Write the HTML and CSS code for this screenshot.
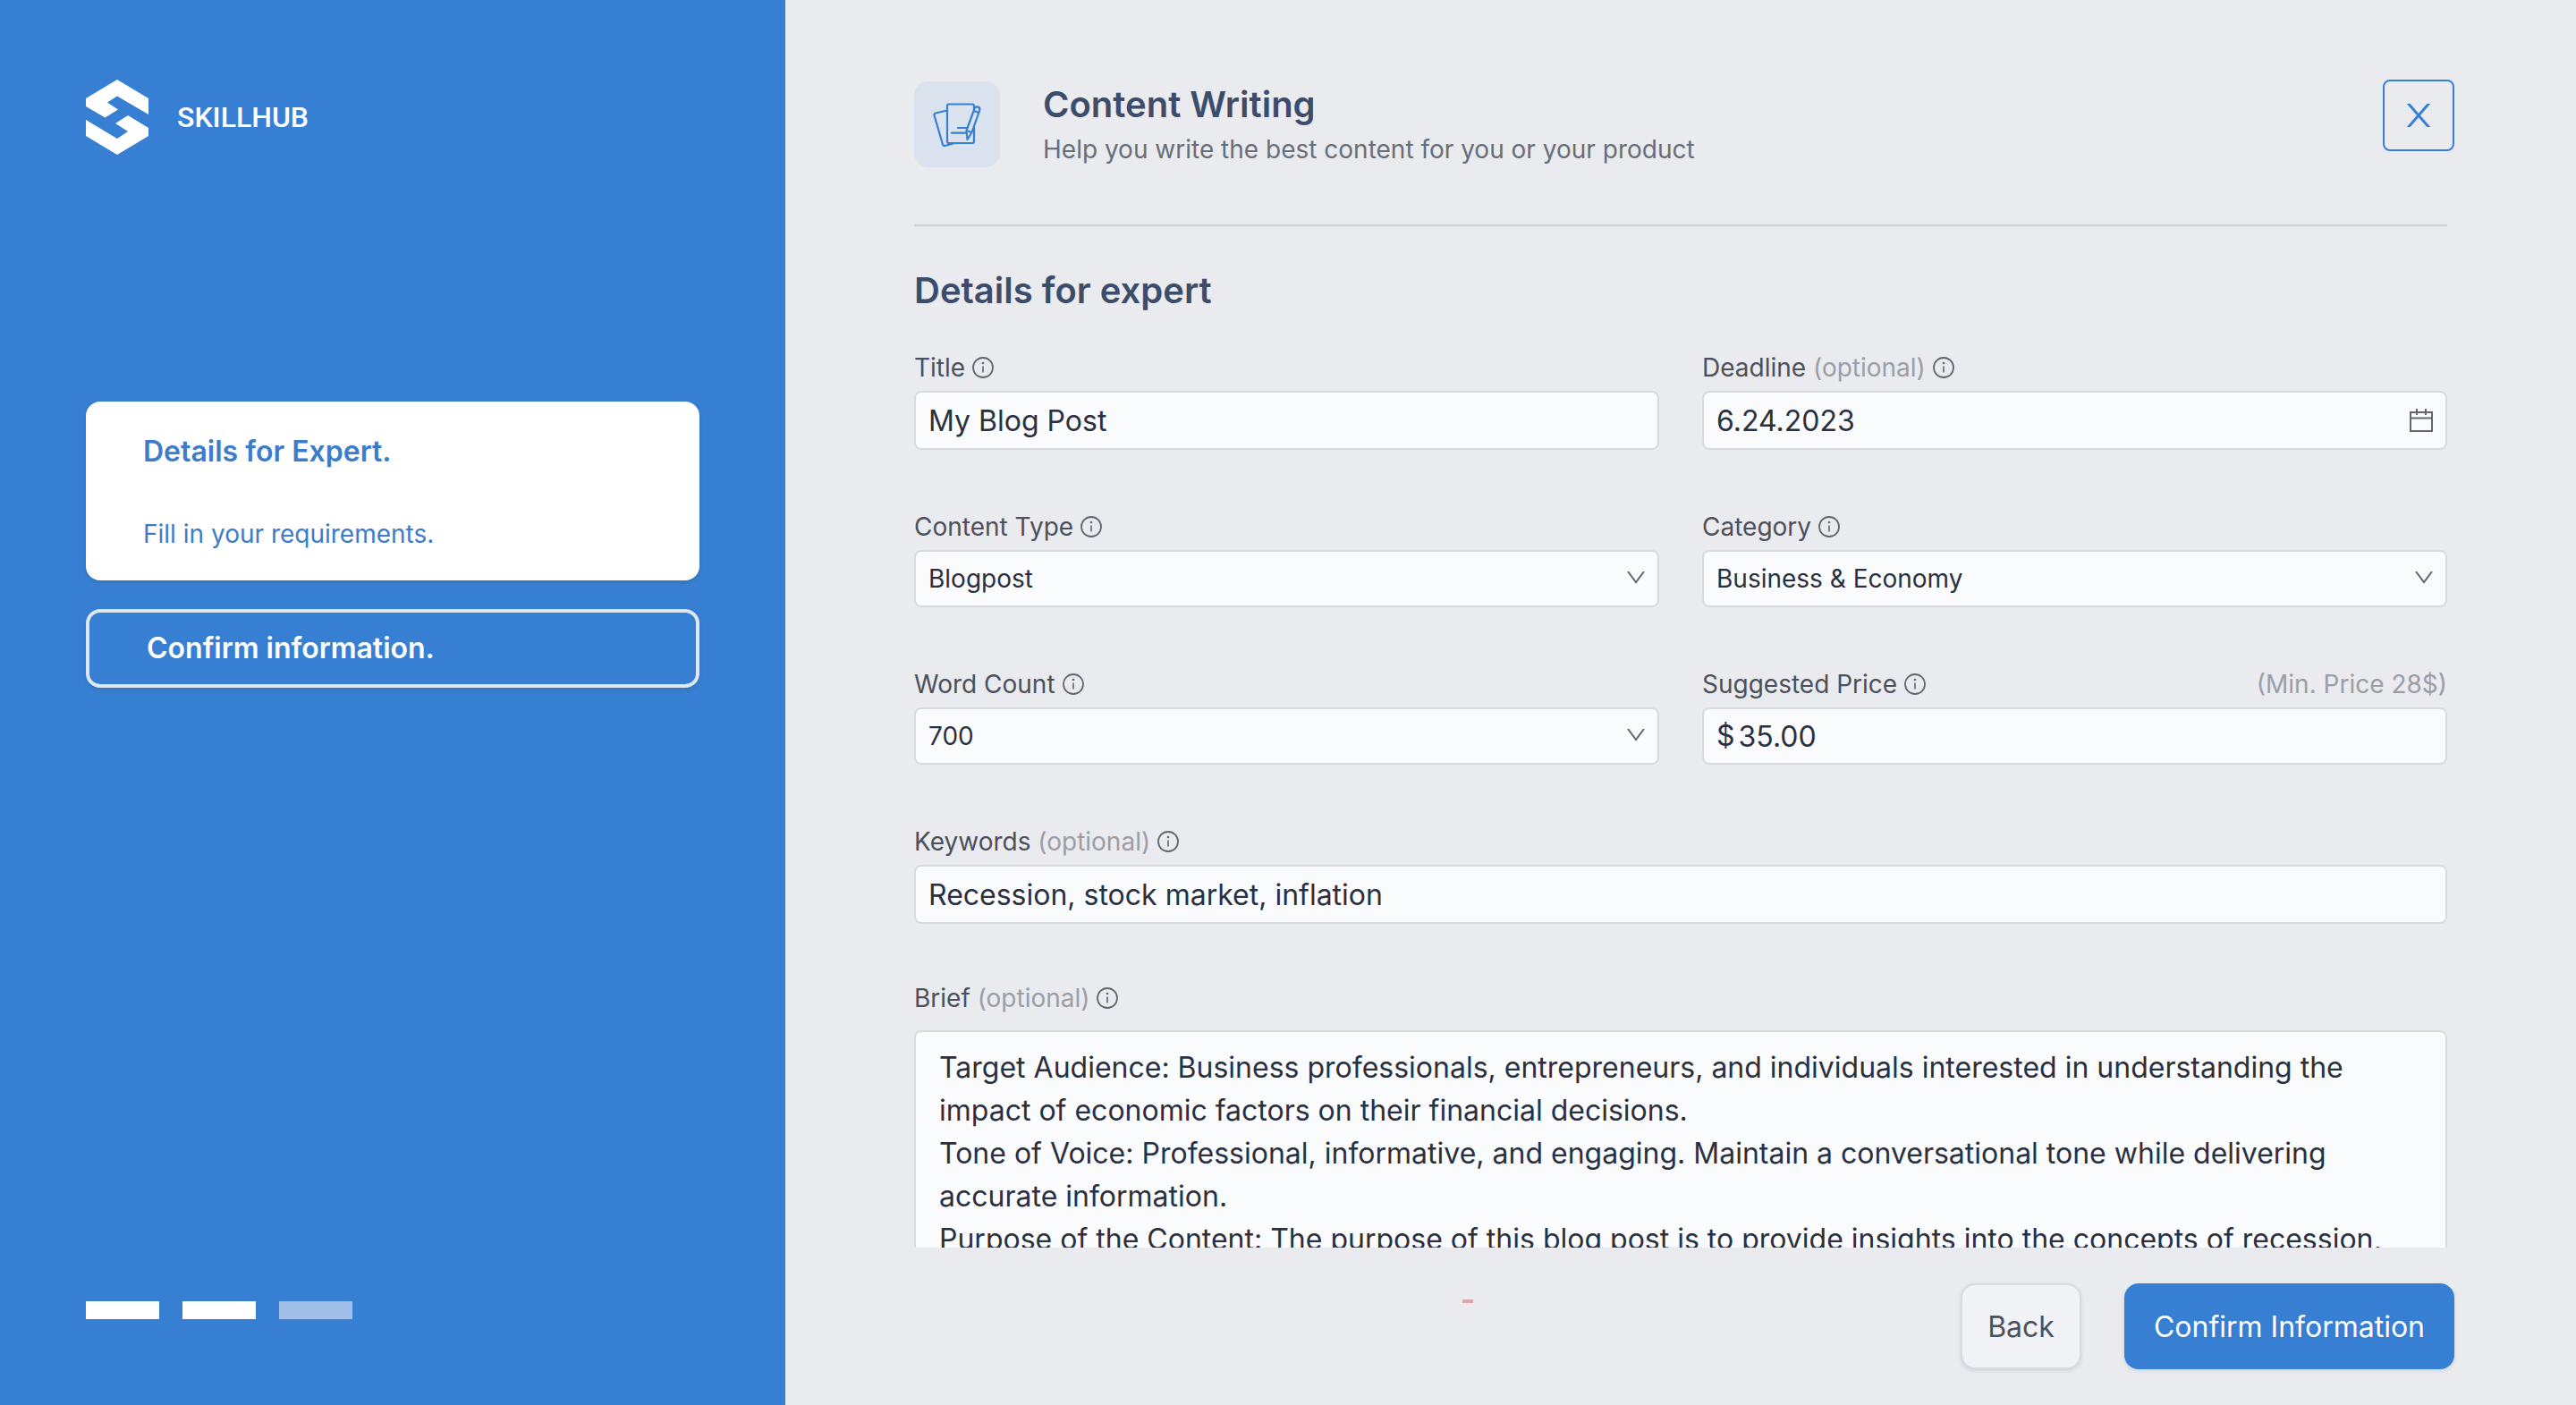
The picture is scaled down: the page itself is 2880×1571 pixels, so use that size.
FILE: index.html
```html
<!DOCTYPE html>
<html lang="en">
<head>
    <meta charset="UTF-8">
    <meta name="viewport" content="width=device-width, initial-scale=1">
    <title>Skillhub - Content Writing</title>
    <link rel="stylesheet" href="styles.css">
</head>
<body>

<!-- icons used more than once -->
<svg class="sprite" aria-hidden="true">
    <symbol id="info" viewBox="0 0 24 24">
        <circle cx="12" cy="12" r="11" fill="none" stroke="currentColor" stroke-width="1.8"/>
        <path d="M12 10.5v7" stroke="currentColor" stroke-width="1.6"/>
        <circle cx="12" cy="7" r="1.3" fill="currentColor"/>
    </symbol>
    <symbol id="chevron" viewBox="0 0 20 14">
        <path d="M1 0l9 12 9-12" fill="none" stroke="currentColor" stroke-width="2"/>
    </symbol>
</svg>

<aside class="sidebar">
    <a href="#" class="logo">
        <svg class="logo-mark" viewBox="0 0 70 84" aria-hidden="true">
            <path fill="#fff" d="M35 0l35 21v18L35 18.500 24 25.500l12 8-14.500 9L0 30V21z"/>
            <path fill="#fff" d="M0 45l35 21 12-8-14-9 14-9 23 14v9L35 84 0 63z"/>
        </svg>
        <span>SKILLHUB</span>
    </a>

    <nav class="steps">
        <a href="#" class="step active">
            <strong>Details for Expert.</strong>
            <span>Fill in your requirements.</span>
        </a>
        <a href="#" class="step">
            <strong>Confirm information.</strong>
        </a>
    </nav>

    <div class="progress">
        <span class="done"></span>
        <span class="done"></span>
        <span></span>
    </div>
</aside>

<main class="content">
    <header class="page-header">
        <div class="service-icon">
            <svg viewBox="0 0 56 56" fill="none" stroke="#377fd3" stroke-width="2.2" stroke-linejoin="round" stroke-linecap="round" aria-hidden="true">
                <!-- back sheet -->
                <path d="M17 12.500L4 15.500a2 2 0 0 0-1.500 2.500l9.500 32.500a2 2 0 0 0 2.500 1.500l11-3"/>
                <!-- front sheet -->
                <path d="M47 12V7.500a2 2 0 0 0-2-2H19a2 2 0 0 0-2 2V47a2 2 0 0 0 2 2h26a2 2 0 0 0 2-2V30M29 32h10M22 37.700h16"/>
                <!-- pen -->
                <path fill="#dae2ee" d="M38.500 35L47.500 10.500a3 3 0 0 1 5.700 2L44.500 37 39.500 45zM38.500 35l6 2M47 13l5.500 2"/>
            </svg>
        </div>
        <div class="service-text">
            <h1>Content Writing</h1>
            <p>Help you write the best content for you or your product</p>
        </div>
        <button type="button" class="close" aria-label="Close">
            <svg viewBox="0 0 26 26" aria-hidden="true">
                <path d="M0-2l26 30M26-2L0 28" stroke="currentColor" stroke-width="3"/>
            </svg>
        </button>
    </header>

    <form class="details" id="details">
        <h2>Details for expert</h2>

        <div class="fields">
            <div class="field">
                <div class="label-row">
                    <label for="title">Title</label>
                    <svg class="info"><use href="#info"/></svg>
                </div>
                <input type="text" id="title" value="My Blog Post">
            </div>

            <div class="field">
                <div class="label-row">
                    <label for="deadline">Deadline <span>(optional)</span></label>
                    <svg class="info"><use href="#info"/></svg>
                </div>
                <div class="control">
                    <input type="text" id="deadline" value="6.24.2023">
                    <svg class="calendar" viewBox="0 0 26 26" fill="none" stroke="currentColor" stroke-width="2" aria-hidden="true">
                        <path d="M1 4h24v21H1zM1 10.500h24M8 0v7M18 0v7"/>
                    </svg>
                </div>
            </div>

            <div class="field">
                <div class="label-row">
                    <label for="type">Content Type</label>
                    <svg class="info"><use href="#info"/></svg>
                </div>
                <div class="control">
                    <select id="type"><option>Blogpost</option></select>
                    <svg class="chevron"><use href="#chevron"/></svg>
                </div>
            </div>

            <div class="field">
                <div class="label-row">
                    <label for="category">Category</label>
                    <svg class="info"><use href="#info"/></svg>
                </div>
                <div class="control">
                    <select id="category"><option>Business &amp; Economy</option></select>
                    <svg class="chevron"><use href="#chevron"/></svg>
                </div>
            </div>

            <div class="field">
                <div class="label-row">
                    <label for="words">Word Count</label>
                    <svg class="info"><use href="#info"/></svg>
                </div>
                <div class="control">
                    <select id="words"><option>700</option></select>
                    <svg class="chevron"><use href="#chevron"/></svg>
                </div>
            </div>

            <div class="field">
                <div class="label-row">
                    <label for="price">Suggested Price</label>
                    <svg class="info"><use href="#info"/></svg>
                    <small>(Min. Price 28$)</small>
                </div>
                <div class="price">
                    <span>$</span>
                    <input type="text" id="price" value="35.00">
                </div>
            </div>

            <div class="field wide">
                <div class="label-row">
                    <label for="keywords">Keywords <span>(optional)</span></label>
                    <svg class="info"><use href="#info"/></svg>
                </div>
                <input type="text" id="keywords" value="Recession, stock market, inflation">
            </div>
        </div>

        <div class="brief">
            <div class="label-row">
                <label for="brief">Brief <span>(optional)</span></label>
                <svg class="info"><use href="#info"/></svg>
            </div>
            <textarea id="brief" rows="8">Target Audience: Business professionals, entrepreneurs, and individuals interested in understanding the impact of economic factors on their financial decisions.
Tone of Voice: Professional, informative, and engaging. Maintain a conversational tone while delivering accurate information.
Purpose of the Content: The purpose of this blog post is to provide insights into the concepts of recession,</textarea>
        </div>
    </form>

    <footer class="actions">
        <span class="error-mark"></span>
        <button type="button" class="btn">Back</button>
        <button type="submit" form="details" class="btn primary">Confirm Information</button>
    </footer>
</main>

</body>
</html>
```
FILE: styles.css
```css
* {
    box-sizing: border-box;
}

body {
    margin: 0;
    height: 100vh;
    display: flex;
    background: #e9ebef;
    font-family: Inter, "Liberation Sans", sans-serif;
    font-size: 28px;
    line-height: 32px;
    color: #2b3040;
}

h1, h2, p {
    margin: 0;
}

h1, h2 {
    font-size: 40px;
    line-height: 48px;
    font-weight: 600;
    color: #3c4d6b;
}

input, select, textarea, button {
    font-family: inherit;
    color: inherit;
    margin: 0;
}

.sprite {
    display: none;
}

/* sidebar */
.sidebar {
    flex: 0 0 878px;
    padding: 89px 96px 96px;
    display: flex;
    flex-direction: column;
    background: #377fd3;
}

.logo {
    display: flex;
    align-items: center;
    gap: 32px;
    color: #fff;
    font-family: Roboto, sans-serif;
    font-size: 32px;
    font-weight: 500;
    text-decoration: none;
}

.logo-mark {
    width: 70px;
    height: 84px;
}

.steps {
    margin-top: 276px;
    display: flex;
    flex-direction: column;
    gap: 32px;
}

.step {
    padding: 20px 64px;
    border: 4px solid #dde8f4;
    border-radius: 16px;
    color: #fff;
    text-decoration: none;
    box-shadow: 0 2px 4px rgba(60, 80, 120, 0.3);
}

.step strong {
    display: block;
    font-size: 32px;
    line-height: 40px;
    font-weight: 600;
}

.step.active {
    padding: 36px 64px;
    border: 0;
    background: #fff;
    color: #3b7ccb;
}

.step.active span {
    display: block;
    margin-top: 56px;
}

.progress {
    margin-top: auto;
    display: flex;
    gap: 26px;
}

.progress span {
    width: 82px;
    height: 20px;
    background: #a0c0ea;
}

.progress .done {
    background: #fff;
}

/* main column */
.content {
    flex: 1;
    min-width: 0;
    padding: 89px 136px 40px 144px;
    display: flex;
    flex-direction: column;
}

.page-header {
    margin-right: 8px;
    padding-bottom: 64px;
    border-bottom: 2px solid #cdcfd4;
    display: flex;
    align-items: flex-start;
}

.service-icon {
    width: 96px;
    height: 96px;
    margin: 2px 48px 0 0;
    padding: 20px;
    border-radius: 16px;
    background: #dae2ee;
}

.service-icon svg {
    display: block;
}

.service-text {
    flex: 1;
}

.service-text h1 {
    margin-top: 4px;
}

.service-text p {
    margin-top: 10px;
    color: #686e78;
}

.close {
    width: 80px;
    height: 80px;
    margin-right: -8px;
    padding: 0;
    display: flex;
    align-items: center;
    justify-content: center;
    background: none;
    border: 2px solid #377fd3;
    border-radius: 8px;
    color: #377fd3;
}

.close svg {
    width: 26px;
    height: 26px;
}

.details {
    flex: 1;
    min-height: 0;
    padding-top: 48px;
    margin-right: 8px;
    overflow: hidden;
}

.fields {
    margin-top: 46px;
    display: grid;
    grid-template-columns: 1fr 1fr;
    gap: 70px 48px;
}

.wide {
    grid-column: span 2;
}

.label-row {
    margin-bottom: 10px;
    display: flex;
    align-items: center;
    gap: 8px;
    color: #4c505b;
}

.label-row span, .label-row small {
    font-size: 28px;
    color: #9b9ea6;
}

.label-row small {
    margin-left: auto;
}

.info {
    width: 24px;
    height: 24px;
    color: #62666f;
}

.control {
    position: relative;
}

input, select, .price, textarea {
    display: block;
    width: 100%;
    height: 66px;
    padding: 0 14px;
    border: 2px solid #d8dade;
    border-radius: 8px;
    background: #fafbfd;
    font-size: 32px;
}

select {
    height: 64px;
    font-size: 28px;
    appearance: none;
}

.chevron {
    position: absolute;
    right: 16px;
    top: 24px;
    width: 20px;
    height: 14px;
    color: #62666f;
}

.calendar {
    position: absolute;
    right: 16px;
    top: 20px;
    width: 26px;
    height: 26px;
    color: #62666f;
}

.price {
    height: 64px;
    display: flex;
    align-items: center;
    gap: 4px;
}

.price input {
    height: 60px;
    padding: 0;
    border: 0;
    background: none;
}

.brief {
    margin-top: 67px;
}

.brief .label-row {
    margin-bottom: 20px;
}

textarea {
    height: auto;
    padding: 16px 26px;
    line-height: 48px;
    resize: none;
    overflow: hidden;
}

.actions {
    padding-top: 40px;
    display: flex;
    gap: 48px;
}

.error-mark {
    width: 12px;
    height: 4px;
    margin: 18px auto 0 613px;
    background: #e0a3ab;
}

.btn {
    height: 96px;
    padding: 0 28px;
    border: 2px solid #d8dade;
    border-radius: 16px;
    background: #f1f2f5;
    font-size: 32px;
    color: #4c505b;
    box-shadow: 0 2px 4px rgba(60, 80, 120, 0.15);
}

.btn.primary {
    padding: 0 33px;
    border: 0;
    background: #377fd3;
    color: #fff;
}
```
